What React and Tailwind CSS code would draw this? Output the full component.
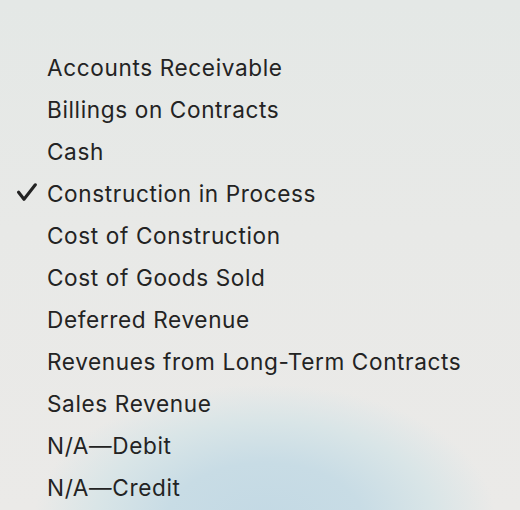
import React from "react";

const items = [
  "Accounts Receivable",
  "Billings on Contracts",
  "Cash",
  "Construction in Process",
  "Cost of Construction",
  "Cost of Goods Sold",
  "Deferred Revenue",
  "Revenues from Long-Term Contracts",
  "Sales Revenue",
  "N/A\u2014Debit",
  "N/A\u2014Credit",
];

export default function App() {
  return (
    <div
      className="relative w-[520px] h-[510px] overflow-hidden bg-[#eae9e7] font-['Inter',sans-serif] text-[#232323]"
    >
      <div className="absolute inset-0 bg-[linear-gradient(180deg,#e4e8e6_0%,#e8e9e7_45%,#ebeae8_100%)]" />
      <div className="absolute left-[35px] top-[385px] w-[460px] h-[270px] rounded-full bg-[radial-gradient(ellipse_at_center,#c3d9e4_0%,#c8dce5_30%,#d9e5e7_52%,rgba(235,234,232,0)_71%)]" />
      <ul className="relative pt-[47px] flex flex-col">
        {items.map((t) => (
          <li key={t} className="h-[42px] flex items-center">
            <span className="w-[47px] h-[42px] relative">
              {t === "Construction in Process" && (
                <svg className="absolute left-[16px] top-[10px]" width="22" height="20" viewBox="0 0 22 20" fill="none">
                  <path d="M2.6 9.2 L8 16.3 L19.3 1.8" stroke="#232323" strokeWidth="3.1" strokeLinecap="round" strokeLinejoin="round" />
                </svg>
              )}
            </span>
            <span className="text-[22.6px] leading-none tracking-[0.62px]">{t}</span>
          </li>
        ))}
      </ul>
    </div>
  );
}
